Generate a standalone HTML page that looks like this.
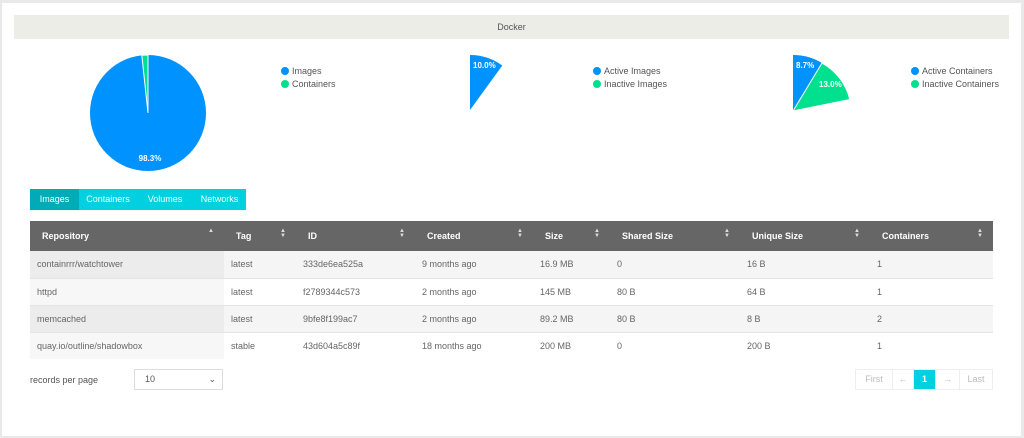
<!DOCTYPE html>
<html><head><style>
*{margin:0;padding:0;box-sizing:border-box}
body{width:1024px;height:438px;background:#e9e9e9;font-family:"Liberation Sans",sans-serif;font-size:9px;color:#555;position:relative;overflow:hidden}
.panel{position:absolute;left:2px;top:3px;width:1019px;height:433px;background:#fff}
.abs{position:absolute}
.hdr{left:14px;top:15px;width:995px;height:24px;background:#edede8;text-align:center;line-height:24px;font-size:9px;color:#555}
.leg div{height:13px;line-height:13px;position:relative;padding-left:11px;color:#555}
.leg div:before{content:"";position:absolute;left:0;top:2px;width:8px;height:8px;border-radius:50%;background:var(--c)}
.tabs{left:30px;top:189px;height:21px;display:flex;background:#00d0e0}
.tabs div{color:#fff;line-height:21px;text-align:center}
table{position:absolute;left:30px;top:221px;width:963px;border-collapse:collapse;table-layout:fixed}
th{background:#666;color:#fff;font-weight:bold;text-align:left;height:30px;padding-left:12px;position:relative}
th span{position:absolute;right:10px;top:8px;font-size:6px;color:#ddd;line-height:5px}
td{height:27px;padding-left:7px;border-bottom:1px solid #e4e4e4;color:#666}
tr.s td{background:#f5f5f5}
tr.s td:first-child{background:#ececec}
tr.w td:first-child{background:#f7f7f7}
.sel{left:134px;top:369px;width:89px;height:21px;border:1px solid #ddd;line-height:19px;padding-left:10px}
.pg{left:855px;top:369px;height:21px;display:flex;border:1px solid #eee}
.pg div{line-height:19px;text-align:center;color:#bbb;border-right:1px solid #eee}
</style></head><body>
<div class="panel"></div>
<div class="abs hdr">Docker</div>
<svg class="abs" style="left:0;top:0" width="1024" height="180">
<circle cx="148" cy="113" r="58" fill="#0092ff"/>
<path d="M148 113 L148 55 A58 58 0 0 0 141.8 55.3 Z" fill="#00e08e" stroke="#fff" stroke-width="1"/>
<text x="150" y="161" font-size="8" fill="#fff" text-anchor="middle" font-weight="bold" font-family="Liberation Sans">98.3%</text>
<path d="M470 110 L470 55 A55 55 0 0 1 502.3 65.5 Z" fill="#0092ff"/>
<text x="473" y="68" font-size="8" fill="#fff" font-weight="bold" font-family="Liberation Sans">10.0%</text>
<path d="M793 111 L793 55 A56 56 0 0 1 822 63 Z" fill="#0092ff"/>
<path d="M793 111 L822 63 A56 56 0 0 1 849.8 99.5 Z" fill="#00e08e" stroke="#fff" stroke-width="1"/>
<text x="796" y="68" font-size="8" fill="#fff" font-weight="bold" font-family="Liberation Sans">8.7%</text>
<text x="819" y="87" font-size="8" fill="#fff" font-weight="bold" font-family="Liberation Sans">13.0%</text>
</svg>
<div class="abs leg" style="left:281px;top:65px"><div style="--c:#0092ff">Images</div><div style="--c:#00e08e">Containers</div></div>
<div class="abs leg" style="left:593px;top:65px"><div style="--c:#0092ff">Active Images</div><div style="--c:#00e08e">Inactive Images</div></div>
<div class="abs leg" style="left:911px;top:65px"><div style="--c:#0092ff">Active Containers</div><div style="--c:#00e08e">Inactive Containers</div></div>
<div class="abs tabs"><div style="width:49px;background:#00abb8">Images</div><div style="width:58px">Containers</div><div style="width:56px">Volumes</div><div style="width:53px">Networks</div></div>
<table>
<colgroup><col style="width:194px"><col style="width:72px"><col style="width:119px"><col style="width:118px"><col style="width:77px"><col style="width:130px"><col style="width:130px"><col></colgroup>
<tr><th>Repository<span>▲</span></th><th>Tag<span>▲<br>▼</span></th><th>ID<span>▲<br>▼</span></th><th>Created<span>▲<br>▼</span></th><th>Size<span>▲<br>▼</span></th><th>Shared Size<span>▲<br>▼</span></th><th>Unique Size<span>▲<br>▼</span></th><th>Containers<span>▲<br>▼</span></th></tr>
<tr class="s"><td>containrrr/watchtower</td><td>latest</td><td>333de6ea525a</td><td>9 months ago</td><td>16.9 MB</td><td>0</td><td>16 B</td><td>1</td></tr>
<tr class="w"><td>httpd</td><td>latest</td><td>f2789344c573</td><td>2 months ago</td><td>145 MB</td><td>80 B</td><td>64 B</td><td>1</td></tr>
<tr class="s"><td>memcached</td><td>latest</td><td>9bfe8f199ac7</td><td>2 months ago</td><td>89.2 MB</td><td>80 B</td><td>8 B</td><td>2</td></tr>
<tr class="w"><td style="border:0">quay.io/outline/shadowbox</td><td style="border:0">stable</td><td style="border:0">43d604a5c89f</td><td style="border:0">18 months ago</td><td style="border:0">200 MB</td><td style="border:0">0</td><td style="border:0">200 B</td><td style="border:0">1</td></tr>
</table>
<div class="abs" style="left:30px;top:375px">records per page</div>
<div class="abs sel">10<span style="position:absolute;right:6px;top:0">⌄</span></div>
<div class="abs pg"><div style="width:37px">First</div><div style="width:21px">←</div><div style="width:22px;background:#00d0e0;color:#fff;font-weight:bold">1</div><div style="width:24px">→</div><div style="width:32px;border:0">Last</div></div>
</body></html>
